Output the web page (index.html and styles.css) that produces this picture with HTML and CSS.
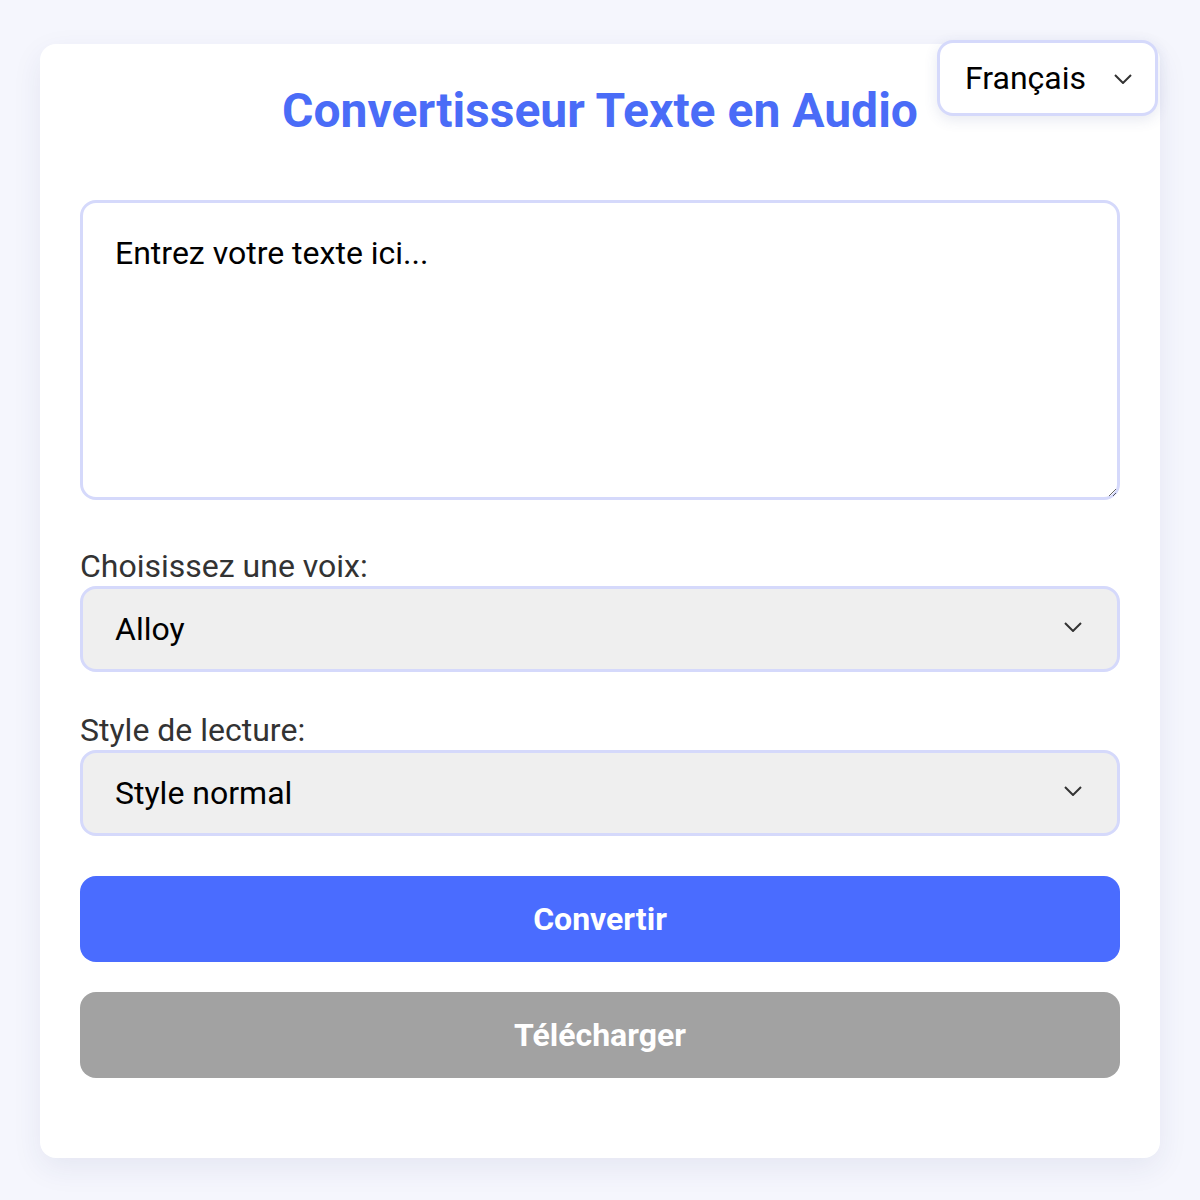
FILE: index.html
```html
<!DOCTYPE html>
<html lang="fr">
<head>
<meta charset="utf-8">
<title>Convertisseur Texte en Audio</title>
<link rel="stylesheet" href="styles.css">
</head>
<body>
<div class="lang">
  <select class="lang-select">
    <option>Français</option>
  </select>
  <svg class="chev lang-chev" viewBox="0 0 18 10" width="18" height="10"><path d="M1 1 9 9 17 1" fill="none" stroke="#333" stroke-width="2"/></svg>
</div>
<main class="card">
  <h1 class="title">Convertisseur Texte en Audio</h1>
  <textarea class="text-input" placeholder="Entrez votre texte ici..."></textarea>
  <label class="label">Choisissez une voix:</label>
  <div class="select-wrap">
    <select class="select"><option>Alloy</option></select>
    <svg class="chev" viewBox="0 0 18 10" width="18" height="10"><path d="M1 1 9 9 17 1" fill="none" stroke="#333" stroke-width="2"/></svg>
  </div>
  <label class="label">Style de lecture:</label>
  <div class="select-wrap">
    <select class="select"><option>Style normal</option></select>
    <svg class="chev" viewBox="0 0 18 10" width="18" height="10"><path d="M1 1 9 9 17 1" fill="none" stroke="#333" stroke-width="2"/></svg>
  </div>
  <button class="btn btn-primary">Convertir</button>
  <button class="btn btn-disabled">Télécharger</button>
</main>
</body>
</html>
```
FILE: styles.css
```css
* { box-sizing: border-box; }
html, body { margin: 0; }
body {
  background: #f5f6fd;
  font-family: Roboto, "Liberation Sans", sans-serif;
  padding: 44px 40px 40px;
  min-height: 1200px;
}
.card {
  background: #fff;
  border-radius: 16px;
  padding: 40px 40px 40px;
  box-shadow: 0 10px 30px rgba(40, 50, 120, 0.08);
  display: flex;
  flex-direction: column;
}
.title {
  margin: 0 0 62px;
  text-align: center;
  color: #4a6cf7;
  font-size: 48px;
  line-height: 54px;
  font-weight: 700;
}
.text-input {
  display: block;
  width: 100%;
  height: 300px;
  border: 3px solid #d5d9fb;
  border-radius: 16px;
  padding: 31px 32px;
  font-family: inherit;
  font-size: 32px;
  color: #000;
  margin: 0 0 48px;
  outline: none;
}
.text-input::placeholder { color: #000; opacity: 1; }
.label {
  display: block;
  font-size: 32px;
  line-height: 37px;
  color: #333;
  margin-bottom: 1px;
}
.select-wrap {
  position: relative;
  margin-bottom: 40px;
}
.select {
  appearance: none;
  -webkit-appearance: none;
  display: block;
  width: 100%;
  height: 86px;
  background: #efefef;
  border: 3px solid #d5d9fb;
  border-radius: 16px;
  padding: 0 32px;
  font-family: inherit;
  font-size: 32px;
  color: #000;
  outline: none;
}
.chev {
  position: absolute;
  right: 38px;
  top: 36px;
  pointer-events: none;
}
.btn {
  display: block;
  width: 100%;
  height: 86px;
  border: none;
  border-radius: 16px;
  color: #fff;
  font-family: inherit;
  font-size: 32px;
  font-weight: 700;
}
.btn-primary { background: #4a6cff; margin-bottom: 30px; }
.btn-disabled { background: #a2a2a2; margin-bottom: 40px; }
.lang {
  position: absolute;
  top: 40px;
  right: 42px;
  width: 221px;
  height: 76px;
}
.lang-select {
  appearance: none;
  -webkit-appearance: none;
  width: 100%;
  height: 100%;
  background: #fff;
  border: 3px solid #d5d9fb;
  border-radius: 16px;
  padding: 0 25px;
  font-family: inherit;
  font-size: 32px;
  color: #000;
  box-shadow: 0 4px 14px rgba(60, 70, 140, 0.12);
  outline: none;
}
.lang-chev {
  right: 26px;
  top: 34px;
}
```
